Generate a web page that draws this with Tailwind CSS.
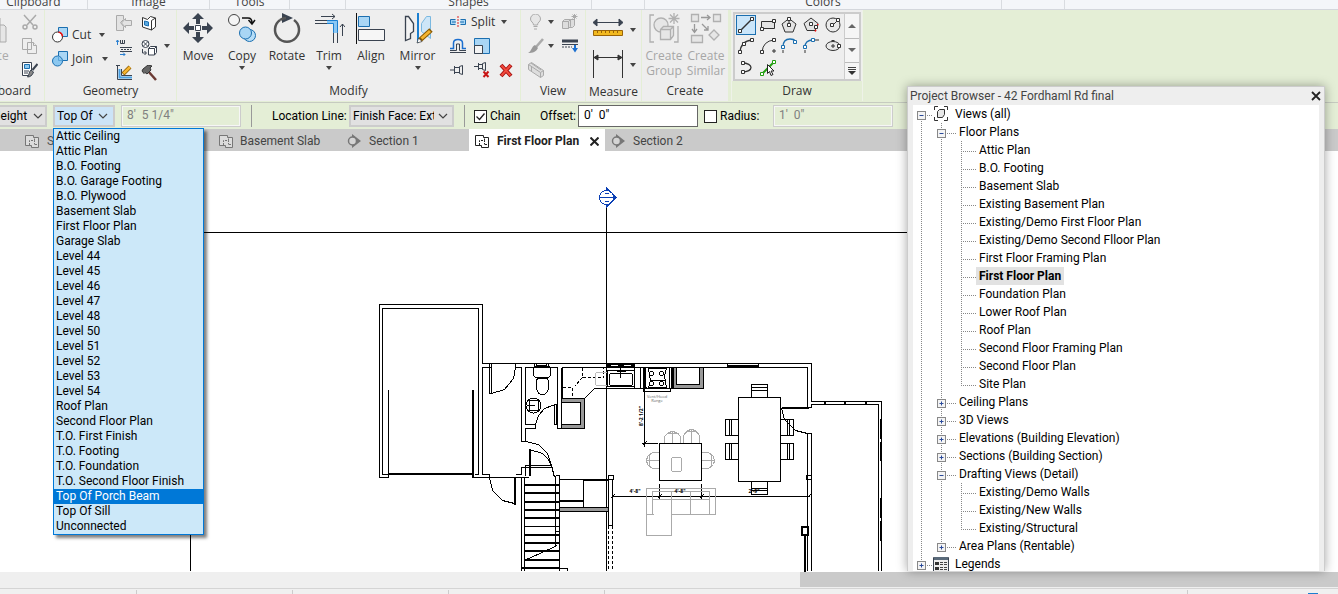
<!DOCTYPE html>
<html lang="en">
<head>
<meta charset="utf-8">
<title>Project Browser - 42 Fordhaml Rd final</title>
<script src="https://cdn.jsdelivr.net/npm/@tailwindcss/browser@4"></script>
</head>
<body class="h-screen overflow-hidden bg-white font-['Open_Sans','Noto_Sans',sans-serif] text-xs text-[#333]">
<svg class="hidden">
  <symbol id="caret" viewBox="0 0 6 4"><path d="M0 0h6L3 4z" fill="#444"/></symbol>
  <symbol id="chev" viewBox="0 0 10 6"><path d="M1 1l4 4 4-4" fill="none" stroke="#444" stroke-width="1.2"/></symbol>
  <symbol id="plan" viewBox="0 0 16 15"><path d="M1.500 1.500h8v2h5v10h-7v-2h-6z" fill="#fff" fill-opacity=".35" stroke="currentColor"/><path d="M5.500 11V6.500h5v4M10.500 6.500V4M11 10.500h3" fill="none" stroke="currentColor" stroke-dasharray="2 1"/></symbol>
  <symbol id="sect" viewBox="0 0 14 14"><path d="M5 0l9 7-9 7z" fill="#777"/><circle cx="5.500" cy="7" r="4" fill="#d4d4d4" stroke="#777" stroke-width="1.500"/></symbol>
</svg>
<div class="relative flex h-full flex-col overflow-hidden">

  <!-- Previous tab's panel titles -->
  <div class="flex h-[10px] shrink-0 items-end overflow-hidden border-b border-[#d4d7dc] bg-[#f4f6f9] text-center leading-[14px] text-[#444]">
    <span class="h-3.5 w-[88px] border-r border-[#d9dce0] pr-5">Clipboard</span>
    <span class="h-3.5 w-[122px] border-r border-[#d9dce0]">Image</span>
    <span class="h-3.5 w-[80px] border-r border-[#d9dce0]">Tools</span>
    <span class="h-3.5 w-[56px] border-r border-[#d9dce0]"></span>
    <span class="h-3.5 w-[246px] border-r border-[#d9dce0]">Shapes</span>
    <span class="h-3.5 w-[53px] border-r border-[#d9dce0]"></span>
    <span class="h-3.5 w-[357px] border-r border-[#d9dce0]">Colors</span>
    <span class="h-3.5 w-[63px] border-r border-[#d9dce0]"></span>
  </div>

  <!-- Ribbon -->
  <div class="flex h-[93px] shrink-0 border-b border-[#c6cbc0] bg-[#e4eed6] pb-px">
    <section class="-ml-9 flex w-20 shrink-0 flex-col bg-[#eee]">
      <div class="flex h-[72px] justify-between pr-1.5 pl-3.5">
        <button class="flex flex-col items-center pt-1 text-[#aaa]"><svg class="h-8 w-7" viewBox="0 0 28 32" fill="#e6e6e6" stroke="#aaa"><path d="M1 4h20v24H1zM13 11h12l2 2v15H13z"/></svg><span class="leading-5">Paste</span></button>
        <div class="flex flex-col gap-2 pt-1">
          <button aria-label="Cut to clipboard"><svg class="block size-4" viewBox="0 0 16 16" fill="none" stroke="#aaa" stroke-width="1.500"><path d="M2 1l9 10M14 1L5 11"/><circle cx="3" cy="13" r="2"/><circle cx="13" cy="13" r="2"/></svg></button>
          <button aria-label="Copy to clipboard"><svg class="block size-4" viewBox="0 0 16 16" fill="#eee" stroke="#aaa"><path d="M.5.500h9v11h-9zM5.500 4.500h6l3 3v8h-9z"/><path d="M11.500 4.500v3h3"/></svg></button>
          <button aria-label="Match type"><svg class="block size-4" viewBox="0 0 16 16"><path d="M.5.500h9v13h-9z" fill="#fff" stroke="#3a4350"/><path d="M2.500 2.500h5v4h-5z" fill="#8cc8f0" stroke="#1b6fb0"/><path d="M2 9h5M2 11h4" stroke="#3a4350"/><path d="M15.500 2l-5 6" stroke="#3a4350" stroke-width="2"/><path d="M9 8l2.500 2c-1 3-3 5-6 5 2-2 1-5 3.500-7z" fill="#888" stroke="#3a4350"/></svg></button>
        </div>
      </div>
      <h2 class="text-center leading-5">Clipboard</h2>
    </section>

    <section class="ml-px flex w-[131px] shrink-0 flex-col bg-[#eee]">
      <div class="flex h-[72px] pl-[7px]">
        <div class="flex w-16 flex-col gap-2 pt-[17px]">
          <button class="flex h-4 w-[53px] items-center gap-1"><svg class="size-4" viewBox="0 0 16 16"><path d="M6.500.500h9v9h-9z" fill="#a9d6f5" stroke="#1b6fb0"/><circle cx="5.500" cy="10" r="5" fill="#fff" stroke="#333"/><path d="M6.500 5A5 5 0 0 1 10.500 9.500" fill="none" stroke="#e11" stroke-width="1.500"/></svg><span class="flex-1 text-left">Cut</span><svg class="h-1 w-1.5"><use href="#caret"/></svg></button>
          <button class="flex h-4 w-14 items-center gap-1"><svg class="size-4" viewBox="0 0 16 16"><path d="M6.500.500h9v9h-9z" fill="#a9d6f5" stroke="#1b6fb0"/><circle cx="5.500" cy="10" r="5" fill="#8cc8f0" stroke="#1b6fb0"/><path d="M6.500 5v4.500h4" fill="none" stroke="#5aa5da"/></svg><span class="flex-1 text-left">Join</span><svg class="h-1 w-1.5"><use href="#caret"/></svg></button>
        </div>
        <div class="grid grid-cols-2 grid-rows-3 gap-x-[9px] gap-y-2 pt-1">
          <button aria-label="Cope"><svg class="block size-4" viewBox="0 0 16 16" fill="#e3e3e3" stroke="#aaa"><path d="M.5.500h7v4l-3 3 3 4v4h-7z"/><path d="M15.500 5.500h-6v-2l-4 4.500 4 4.500v-2h6z"/></svg></button>
          <button aria-label="Wall joins"><svg class="block size-4" viewBox="0 0 16 16"><path d="M1.500 2.500l5 2 3-3 5 1.500v9l-4 3-9-3z" fill="#fff" stroke="#333"/><path d="M10.500 5.500l4-2.500M10.500 5.500V15" stroke="#333"/><path d="M3.500 6l4 1v4l-4-1z" fill="#5aa9e0" stroke="#1b6fb0"/></svg></button>
          <button aria-label="Beam joins"><svg class="block size-4" viewBox="0 0 16 16" fill="none" stroke="#3a4350"><path d="M4.500 0v3.500h4V0M6.500 0v3"/><path d="M1.500 0v5M0 2l1.500-2L3 2M4 14.500h5M7 12.500l2 2-2 2" stroke="#2a7fd0"/><path d="M4 7.500h12M4 11.500h12"/><path d="M5 9.500h10" stroke-dasharray="2 1"/></svg></button>
          <button aria-label="Paint"><svg class="block size-4" viewBox="0 0 16 16" fill="#fff" stroke="#3a4350"><circle cx="4.500" cy="4" r="3.500"/><path d="M2 1.500l5 5M7 1.500l-5 5"/><path d="M7.500 8.500l2-2h6v6l-2 2.500h-6zM7.500 8.500h6V15M13.500 8.500l2-2"/><path d="M1.500 9v4H5M3.500 11l2 2-2 2" fill="none"/></svg></button>
          <button aria-label="Edit profile"><svg class="block size-4" viewBox="0 0 16 16" fill="none"><path d="M1.500 0v14.500H16M5.500 4v6.500H16" stroke="#3a4350"/><path d="M3.500 4v8.500H16" stroke="#49a0e3" stroke-width="2"/><path d="M7 9l7-7" stroke="#8a5a00" stroke-width="4"/><path d="M7.500 8.500L14 2" stroke="#f5b530" stroke-width="2.500"/><path d="M0 .500h4" stroke="#3a4350"/></svg></button>
          <button aria-label="Demolish"><svg class="block size-4" viewBox="0 0 16 16"><path d="M7 6l8 9" stroke="#6b3a33" stroke-width="2.500"/><path d="M1 6l1-2 5-4 4 1-2 2 1 2-4 4-2-1.500-1 1z" fill="#666" stroke="#333"/></svg></button>
        </div>
        <svg class="mt-[34px] ml-[7px] h-1 w-1.5"><use href="#caret"/></svg>
      </div>
      <h2 class="text-center leading-5">Geometry</h2>
    </section>

    <section class="ml-px flex w-[343px] shrink-0 flex-col bg-[#eee]">
      <div class="flex h-[72px] items-start">
        <button class="flex w-[42px] flex-col items-center pt-0.5"><svg class="size-8" viewBox="0 0 32 32" fill="#3a4350"><path d="M16 1l6 6h-4v5h-4V7h-4zM16 31l6-6h-4v-5h-4v5h-4zM1 16l6-6v4h5v4H7v4zM31 16l-6-6v4h-5v4h5v4z"/><path d="M13.500 13.500h5v5h-5z" fill="#fff" stroke="#3a4350"/></svg><span class="mt-1 leading-4">Move</span></button>
        <button class="ml-px flex w-11 flex-col items-center pt-0.5"><svg class="size-8" viewBox="0 0 32 32"><circle cx="8" cy="8" r="5.500" fill="#f5f5f5" stroke="#444"/><path d="M16 6h6q4 0 4 5M22.500 8l3.500 4 3-4" fill="none" stroke="#111" stroke-width="1.500"/><circle cx="23.500" cy="23.500" r="6" fill="#b6ddf7" stroke="#1b6fb0"/><circle cx="19.500" cy="21" r="6" fill="#a9d6f5" stroke="#1b6fb0"/></svg><span class="mt-1 leading-4">Copy</span><svg class="mt-0.5 h-1 w-1.5"><use href="#caret"/></svg></button>
        <button class="flex w-[46px] flex-col items-center pt-0.5"><svg class="size-8" viewBox="0 0 32 32"><path d="M9 8a12 12 0 1 0 14 0" fill="none" stroke="#555" stroke-width="2.500"/><path d="M11 1l11 5-11 5z" fill="#3a4350"/><path d="M9 8q3-2 6-2" stroke="#555" stroke-width="2.500" fill="none"/></svg><span class="mt-1 leading-4">Rotate</span></button>
        <button class="flex w-[38px] flex-col items-center pt-0.5"><svg class="size-8" viewBox="0 0 32 32" fill="none" stroke="#3a4350"><path d="M2 8.500h12M2 11.500h12M20.500 20v11M24.500 20v11M8 4.500h14M19 2l3 2.500L19 7M29.500 24V12M27 15l2.500-3 2.500 3"/><path d="M14 10h8.500v11" stroke="#8cc8f5" stroke-width="4"/><path d="M14 8.500h10.500v12M14 11.500h6.500v9" stroke="#1b7fd0"/></svg><span class="mt-1 leading-4">Trim</span><svg class="mt-0.5 h-1 w-1.5"><use href="#caret"/></svg></button>
        <button class="flex w-[46px] flex-col items-center pt-0.5"><svg class="size-8" viewBox="0 0 32 32"><path d="M1.500 1v31" stroke="#111"/><path d="M3.500 4.500h11v10h-11z" fill="#a9d6f5" stroke="#1b6fb0"/><path d="M3.500 17.500h26v11h-26z" fill="#f6f6f6" stroke="#3a4350"/></svg><span class="mt-1 leading-4">Align</span></button>
        <button class="flex w-[47px] flex-col items-center pt-0.5"><svg class="size-8" viewBox="0 0 32 32"><path d="M3.500 4.500h3l5 7v8l-3 2v5l-5 2z" fill="#f3f3f3" stroke="#3a4350" stroke-width="1.300"/><path d="M28.500 4.500h-4l-5 7v8l9 7z" fill="#cde6f8" stroke="#7ab8e0"/><path d="M16 1v30" stroke="#1b7fd0" stroke-width="2"/><path d="M18 28l11-10" stroke="#8a5a00" stroke-width="5"/><path d="M19.500 26.500L28 19" stroke="#f5b530" stroke-width="3"/><path d="M15 31l1.500-5 3.500 3.500z" fill="#fff" stroke="#333" stroke-width=".7"/></svg><span class="mt-1 leading-4">Mirror</span><svg class="mt-0.5 h-1 w-1.5"><use href="#caret"/></svg></button>
        <div class="ml-[9px] flex flex-col gap-2 pt-1">
          <button class="flex h-4 items-center"><svg class="size-4" viewBox="0 0 16 16"><path d="M5.500 5.500h-5v5h5M10.500 5.500h5v5h-5" fill="#a9d6f5" stroke="#1b6fb0"/><path d="M8 2v12" stroke="#d22" stroke-dasharray="2 1"/><path d="M2 8h4M10 8h4" stroke="#1b6fb0"/></svg><span class="ml-[5px]">Split</span><svg class="ml-1.5 h-1 w-1.5"><use href="#caret"/></svg></button>
          <div class="flex gap-2">
            <button aria-label="Offset"><svg class="block size-4" viewBox="0 0 16 16" fill="none"><path d="M0 14.500h16M0 12.500h6.500V6h3v6.500H16" stroke="#3a4350"/><path d="M0 10.500h3.500V5q0-3.500 4.500-3.500T12.500 5v5.500H16" stroke="#1b6fd0" stroke-width="1.500"/></svg></button>
            <button aria-label="Scale"><svg class="block size-4" viewBox="0 0 16 16"><path d="M.5.500h15v15H.5z" fill="#a9d6f5" stroke="#1b6fb0"/><path d="M.5 7.500h8v8h-8z" fill="#f3f3f3" stroke="#3a4350"/></svg></button>
          </div>
          <div class="flex gap-2">
            <button aria-label="Pin"><svg class="block size-4" viewBox="0 0 16 16" fill="none" stroke="#3a4350"><path d="M0 8h4M4.500 4v8M4.500 5.500h5M4.500 10.500h5M9.500 4.500l3-1v9l-3-1z"/></svg></button>
            <button aria-label="Unpin"><svg class="block size-4" viewBox="0 0 16 16" fill="none" stroke="#3a4350"><path d="M0 4.500h4M4.500 1v7M4.500 2.500h4M4.500 6.500h4M8.500 1.500l3-1v8l-3-1z"/><path d="M9.500 9.500l5 5.500M14.500 9.500L9.500 15" stroke="#c81414" stroke-width="2"/></svg></button>
            <button aria-label="Delete"><svg class="block size-4" viewBox="0 0 16 16"><path d="M3 3l10 11M13 3L3 14" stroke="#a81010" stroke-width="4"/><path d="M3.500 3.500l9 10M12.500 3.500l-9 10" stroke="#f24a3d" stroke-width="2"/></svg></button>
          </div>
        </div>
      </div>
      <h2 class="text-center leading-5">Modify</h2>
    </section>

    <section class="ml-px flex w-16 shrink-0 flex-col bg-[#eee]">
      <div class="grid h-[72px] grid-cols-[16px_18px_16px] grid-rows-[16px_16px_16px] items-center gap-y-2 pt-1 pl-[7px]">
        <button aria-label="Hide"><svg class="block size-4" viewBox="0 0 16 16" fill="#e6e6e6" stroke="#aaa"><path d="M5.500 11c0-3-3-3-3-6a5 5 0 0 1 10 0c0 3-3 3-3 6zM5.500 12.500h4M6 15h3"/></svg></button>
        <svg class="ml-1 h-1 w-1.5"><use href="#caret"/></svg>
        <button aria-label="Displace"><svg class="block size-4" viewBox="0 0 16 16" fill="#ddd" stroke="#aaa"><path d="M.5 7.500l2-2h6v7l-2 2h-6zM.5 7.500h6v7M6.500 7.500l2-2M8.500 5.500h4v6l-2 2h-3"/><path d="M12.500 0v6M9.500 2.500h6M10.500.500l4 4M14.500.500l-4 4"/></svg></button>
        <button aria-label="Override"><svg class="block size-4" viewBox="0 0 16 16"><path d="M15 1L8 9" stroke="#aaa" stroke-width="2.500"/><path d="M7 7l3 3c-2 4-5 5-10 5 4-2 3-6 7-8z" fill="#999"/></svg></button>
        <svg class="ml-1 h-1 w-1.5"><use href="#caret"/></svg>
        <button aria-label="Linework"><svg class="block size-4" viewBox="0 0 16 16"><path d="M0 3h16" stroke="#3a4350" stroke-width="3"/><path d="M0 6.500h16" stroke="#3a4350"/><path d="M0 9h10" stroke="#3a4350" stroke-dasharray="2 1"/><path d="M12 7h2v3h2l-3 4.500-3-4.500h2z" fill="#1b6fd0"/></svg></button>
        <button aria-label="Section box"><svg class="block size-4" viewBox="0 0 16 16" fill="#ddd" stroke="#aaa"><path d="M.5 2.500l3-2 12 8v5l-3 2-12-8zM.5 2.500l12 8v5M12.500 10.500l3-2M3.500 5v4M3 1l10 7"/></svg></button>
      </div>
      <h2 class="text-center leading-5">View</h2>
    </section>

    <section class="ml-px flex w-[55px] shrink-0 flex-col bg-[#eee]">
      <div class="grid h-[72px] grid-cols-[32px_6px] content-start items-center gap-x-1.5 pt-1.5 pl-1.5">
        <button aria-label="Measure"><svg class="block h-7 w-8" viewBox="0 0 32 28"><path d="M2 6.500h28M5 3L1 6.500 5 10zM27 3l4 3.500L27 10z" fill="#3a4350" stroke="#3a4350"/><path d="M1.500 14.500h29v5h-29z" fill="#f2b91f" stroke="#9a6408"/><path d="M5.500 14v3M9.500 14v3M13.500 14v3M17.500 14v3M21.500 14v3M25.500 14v3" stroke="#9a6408"/></svg></button>
        <svg class="h-1 w-1.5"><use href="#caret"/></svg>
        <button aria-label="Dimension"><svg class="mt-1.5 block h-8 w-8" viewBox="0 0 32 32" stroke="#333"><path d="M1.500 0v28M30.500 0v28M2 7.500h28"/><path d="M2 7.500L6 5v5zM30 7.500L26 5v5z" fill="#333"/></svg></button>
        <svg class="mt-1 h-1 w-1.5"><use href="#caret"/></svg>
      </div>
      <h2 class="text-center leading-5">Measure</h2>
    </section>

    <section class="ml-px flex w-[86px] shrink-0 flex-col bg-[#eee]">
      <div class="flex h-[72px] text-[#a6a6a6]">
        <button class="flex w-11 flex-col items-center pt-0.5"><svg class="size-8" viewBox="0 0 32 32" fill="#e6e6e6" stroke="#b0b0b0" stroke-width="1.300"><path d="M6 3H2v27h4M26 30h4V14" fill="none"/><circle cx="13" cy="13" r="7"/><path d="M12.500 17.500l3-3h10v9l-3 4h-10zM12.500 17.500h10v10M22.500 17.500l3-3"/><path d="M26 1v11M20.500 6.500h11M22 2.500l8 8M30 2.500l-8 8"/></svg><span class="mt-1 leading-[15px]">Create Group</span></button>
        <button class="flex w-10 flex-col items-center pt-0.5"><svg class="size-8" viewBox="0 0 32 32" fill="#e6e6e6" stroke="#b0b0b0" stroke-width="1.300"><path d="M1.500 2.500h7v7h-7zM23.500 2.500h7v7h-7zM1.500 23.500h11v7h-11zM24 18l5 5-5 5-5-5z"/><path d="M11 5.500h9M17 3l3 2.500L17 8M4.500 12v8M2 17l2.500 3.500L7 17M12 12l6 6M18 14v4h-4" fill="none" stroke="#999"/></svg><span class="mt-1 leading-[15px]">Create Similar</span></button>
      </div>
      <h2 class="text-center leading-5">Create</h2>
    </section>

    <section class="ml-[3px] flex w-[132px] shrink-0 flex-col border-x border-[#eef2e8]">
      <div class="h-[72px] bg-[#eee] px-px pt-0.5">
        <div class="flex h-[69px] border-2 border-[#ccc]">
          <div class="grid flex-1 grid-cols-5 grid-rows-3 place-items-center">
            <button class="border border-[#1b6fb0] bg-[#cbe6fa]" aria-label="Line"><svg class="block size-[18px]" viewBox="0 0 18 18" fill="#fff" stroke="#333"><path d="M3 15L15 3" stroke-width="1.500"/><path d="M1.500 13.500h3v3h-3zM13.500 1.500h3v3h-3z"/></svg></button>
            <button aria-label="Rectangle"><svg class="block size-4" viewBox="0 0 16 16" fill="#fff" stroke="#333"><path d="M1.500 4.500h13v7h-13z" fill="#e3e3e3"/><path d="M.5 10.500h3v3h-3zM12.500 2.500h3v3h-3z"/></svg></button>
            <button aria-label="Inscribed polygon"><svg class="block size-4" viewBox="0 0 16 16" fill="#fff" stroke="#333"><path d="M8 1.500l7 5.500-3 8H4L1 7z" fill="#e3e3e3"/><path d="M8 2v6"/><path d="M6.500.500h3v3h-3zM6.500 6.500h3v3h-3z"/></svg></button>
            <button aria-label="Circumscribed polygon"><svg class="block size-4" viewBox="0 0 16 16" fill="#fff" stroke="#333"><path d="M8 1l7 5.500-3 7H4L1 6.500z" fill="#e3e3e3"/><path d="M15 7l-3 8" stroke="#e11" stroke-width="1.500" stroke-dasharray="2 1"/><path d="M6.500 5.500h3v3h-3zM11.500 8.500h3v3h-3z"/></svg></button>
            <button aria-label="Circle"><svg class="block size-4" viewBox="0 0 16 16" fill="#fff" stroke="#333"><circle cx="8" cy="8" r="7" fill="#e9e9e9"/><path d="M8 8l5-5"/><path d="M5.500 6.500h3v3h-3zM11.500 1.500h3v3h-3z"/></svg></button>
            <button aria-label="Start-end-radius arc"><svg class="block size-4" viewBox="0 0 16 16" fill="#fff" stroke="#333"><path d="M2 14Q3 3 14 2" fill="none" stroke-width="1.300"/><path d="M.5 12.500h3v3h-3zM4.500 4.500h3v3h-3zM12.500.500h3v3h-3z"/></svg></button>
            <button aria-label="Center-ends arc"><svg class="block size-4" viewBox="0 0 16 16" fill="#fff" stroke="#333"><path d="M2 14Q3 3 14 2" fill="none"/><path d="M.5 12.500h3v3h-3zM12.500.500h3v3h-3z"/><path d="M14 11v4M12 13h4"/></svg></button>
            <button aria-label="Tangent end arc"><svg class="block size-4" viewBox="0 0 16 16" fill="#fff" stroke="#1b6fb0"><path d="M2 9Q2 1 9 1q4 0 5 2" fill="none" stroke-width="1.300"/><path d="M.5 7.500h3v3h-3zM12.500 2.500h3v3h-3z"/><path d="M2 12v3" stroke="#333"/></svg></button>
            <button aria-label="Fillet arc"><svg class="block size-4" viewBox="0 0 16 16" fill="#fff" stroke="#1b6fb0"><path d="M2 9Q2 2 10 2" fill="none" stroke-width="1.300"/><path d="M.5 7.500h3v3h-3zM8.500.500h3v3h-3z"/><path d="M2 12v3M12 2h4" stroke="#333"/></svg></button>
            <button aria-label="Ellipse"><svg class="block size-4" viewBox="0 0 16 16" fill="#fff" stroke="#333"><ellipse cx="8" cy="8" rx="7" ry="4.500" fill="#e9e9e9"/><path d="M6 8h4M8 6v4"/><path d="M12.500 6.500h3v3h-3zM6.500 2.500h3"/></svg></button>
            <button aria-label="Partial ellipse"><svg class="block size-4" viewBox="0 0 16 16" fill="#fff" stroke="#333"><path d="M4 3c12 0 12 9 0 9" fill="none" stroke-width="1.300"/><path d="M3.500 1.500h3v3h-3zM3.500 10.500h3v3h-3z"/></svg></button>
            <button aria-label="Pick lines"><svg class="block size-4" viewBox="0 0 16 16" fill="#fff" stroke="#22a010"><path d="M2 14L14 2" stroke-width="2"/><path d="M.5 12.500h3v3h-3zM12.500.500h3v3h-3z"/><path d="M7.500 4.500v9l2-2 1.500 4 2-1-2-3.500h3z" stroke="#222"/></svg></button>
          </div>
          <div class="flex w-[15px] flex-col divide-y divide-[#bbb] border-l border-[#ccc] bg-[#f5f5f5]">
            <button class="grid flex-1 place-items-center" aria-label="Scroll up"><svg class="h-1 w-2" viewBox="0 0 8 4"><path d="M0 4h8L4 0z" fill="#666"/></svg></button>
            <button class="grid flex-1 place-items-center" aria-label="Scroll down"><svg class="h-1 w-2" viewBox="0 0 8 4"><path d="M0 0h8L4 4z" fill="#666"/></svg></button>
            <button class="grid h-4 place-items-center" aria-label="Expand gallery"><svg class="h-2 w-2" viewBox="0 0 8 8"><path d="M0 .500h8M0 2.500h8" stroke="#444"/><path d="M0 4h8L4 8z" fill="#333"/></svg></button>
          </div>
        </div>
      </div>
      <h2 class="text-center leading-5">Draw</h2>
    </section>
  </div>

  <!-- Options bar -->
  <div class="flex h-[26px] shrink-0 items-center overflow-hidden bg-[#e4eed6] font-[Roboto,sans-serif] text-black">
    <div class="-ml-4 grid w-[63px] shrink-0 items-center">
      <select aria-label="Constraint" class="col-start-1 row-start-1 h-[22px] w-full appearance-none border-2 border-[#ccc] bg-[#e1e1e1] pl-1.5"><option>Height</option></select>
      <svg class="pointer-events-none col-start-1 row-start-1 mr-1 h-1.5 w-2.5 justify-self-end"><use href="#chev"/></svg>
    </div>
    <div class="ml-1.5 grid w-[62px] shrink-0 items-center">
      <select aria-label="Top constraint level" class="col-start-1 row-start-1 h-[22px] w-full appearance-none border-2 border-[#ccc] bg-[#cce4f7] pl-0.5"><option>Top Of Porch Beam</option></select>
      <span class="pointer-events-none col-start-1 row-start-1 mr-0.5 flex h-4 w-5 items-center justify-center justify-self-end bg-[#cce4f7]"><svg class="h-1.5 w-2.5"><use href="#chev"/></svg></span>
    </div>
    <input aria-label="Height value" class="ml-1.5 h-[22px] w-[120px] shrink-0 border-2 border-[#f6f6f6] pb-0.5 pl-1 text-[#808080] outline outline-[#ccc] -outline-offset-1" value="8'  5 1/4&quot;" disabled>
    <span class="ml-2.5 h-[22px] w-px bg-[#999]"></span>
    <label for="loc" class="ml-5 w-[77px] shrink-0 whitespace-nowrap">Location Line:</label>
    <div class="grid w-[105px] shrink-0 items-center">
      <select id="loc" class="col-start-1 row-start-1 h-[22px] w-full appearance-none border-2 border-[#ccc] bg-[#e1e1e1] pl-0.5"><option>Finish Face: Exterior</option></select>
      <span class="pointer-events-none col-start-1 row-start-1 mr-0.5 flex h-4 w-[18px] items-center justify-center justify-self-end bg-[#e1e1e1]"><svg class="h-1.5 w-2.5"><use href="#chev"/></svg></span>
    </div>
    <span class="ml-2.5 h-[22px] w-px bg-[#999]"></span>
    <label class="ml-[9px] flex w-[66px] shrink-0 items-center gap-[3px]"><span class="grid place-items-center"><input type="checkbox" checked class="col-start-1 row-start-1 size-[13px] appearance-none border border-[#222] bg-white"><svg class="pointer-events-none col-start-1 row-start-1 size-[9px]" viewBox="0 0 9 9"><path d="M.5 4.500l3 3L8.500 1.500" fill="none" stroke="#222" stroke-width="1.300"/></svg></span>Chain</label>
    <label for="off" class="w-[38px] shrink-0">Offset:</label>
    <input id="off" class="h-[22px] w-[120px] shrink-0 border border-[#666] bg-white pb-0.5 pl-[5px]" value="0'  0&quot;">
    <label class="ml-1.5 flex w-[69px] shrink-0 items-center gap-[3px]"><input type="checkbox" class="size-[13px] appearance-none border border-[#222] bg-white">Radius:</label>
    <input aria-label="Radius value" class="h-[22px] w-[120px] shrink-0 border-2 border-[#f6f6f6] pb-0.5 pl-1 text-[#808080] outline outline-[#ccc] -outline-offset-1" value="1'  0&quot;" disabled>
  </div>

  <!-- View tabs -->
  <nav class="flex h-[22px] shrink-0 items-center bg-[#cacaca] pl-6 font-[Roboto,sans-serif] text-[#555]">
    <a href="#" class="flex w-[194px] items-center gap-[7px] pt-0.5 text-[#777]"><svg class="h-[15px] w-4"><use href="#plan"/></svg><span class="text-[#555]">Second Floor Plan</span></a>
    <a href="#" class="flex w-[129px] items-center gap-[6px] pt-0.5 text-[#777]"><svg class="h-[15px] w-4"><use href="#plan"/></svg><span class="text-[#444]">Basement Slab</span></a>
    <a href="#" class="flex w-[122px] items-center gap-2 pt-0.5 text-[#444]"><svg class="size-3.5"><use href="#sect"/></svg>Section 1</a>
    <div class="flex h-full w-[136px] items-center bg-white pt-0.5 pl-[5px] text-[#222]"><a href="#" class="flex items-center gap-[7px] font-bold whitespace-nowrap"><svg class="h-[15px] w-4"><use href="#plan"/></svg>First Floor Plan</a><button class="mr-1.5 ml-auto" aria-label="Close view"><svg class="block size-[9px]" viewBox="0 0 9 9"><path d="M.5.500l8 8M8.500.500l-8 8" stroke="#222" stroke-width="2"/></svg></button></div>
    <a href="#" class="ml-1.5 flex items-center gap-2 pt-0.5 text-[#444]"><svg class="size-3.5"><use href="#sect"/></svg>Section 2</a>
  </nav>

  <!-- Drawing area -->
  <main class="min-h-0 flex-1 overflow-hidden bg-white">
    <svg class="block h-full w-full" shape-rendering="crispEdges">
      <g transform="translate(.5,-150.500)" fill="none" stroke="#000">
        <path d="M190 500V570M190 232H907M606 206V570"/>
        <!-- garage -->
        <path d="M482 363V304H379V477H388V389M388 474H382V308H478V474H474M473 477H528"/>
        <path d="M388 473.500H473M472.500 389V477" stroke-width="2"/>
        <!-- outer walls -->
        <path d="M482 363H811V401M491 367H482V474H489V477M807 407V367H561M515 363V367H521V441H525V428H535V424H525V367H557V428H584"/>
        <path d="M489 363V393H491V363M515 367L513 378 504 389 491 393"/>
        <path d="M489 477L492 490 502 500 514 503M515 474H521V467H551V465H525V475"/>
        <path d="M514.500 477V504M529.500 449V475" stroke-width="2"/>
        <path d="M525 441L538 444 547 453 551 465 554 477M529 449L542 453 548 459 551 465"/>
        <path d="M534 363V367H548V363M536 363V367M546 363V367M536 365H546M533 366H549"/>
        <!-- bathroom -->
        <path d="M533 367V375L535 377H548L550 375V367M537 378H547C550 383 548 392 544 394H540C536 392 534 383 537 378M557 428V403"/>
        <circle cx="533" cy="405" r="7.500"/><path d="M529 400H538V410H529zM526 405H534"/>
        <path d="M554 404V424H556V404zM555 404L544 408 538 415 535 424"/>
        <path d="M561.500 367V398" stroke-width="2"/>
        <path d="M561 398H584V428H561z" fill="#999"/><path d="M561 402H580V424H561z" fill="#fff"/>
        <!-- kitchen -->
        <path d="M582 367V377H603V367M582 377L574 386M562 387H572V398" stroke-dasharray="3 2"/>
        <path d="M584 398L594 388H703"/>
        <rect x="595" y="372" width="12" height="13" rx="2" stroke="#bbb"/>
        <path d="M606 364H634V366H606z" fill="#000"/><path d="M610 365H617M623 365H630" stroke="#fff"/>
        <path d="M607 370H634V386H607zM634 367V388M620 366V377M616 371H625M640 367V388"/><rect x="609" y="373" width="23" height="12" rx="2"/>
        <path d="M643 367V388H671V367M645 367V388M669 367V388M643 388V391H670V388M648 368H666L664 375 666 387H648L650 380 648 368M650 380H664" />
        <path d="M643.500 367V388M671.500 367V388" stroke-width="2"/>
        <circle cx="651" cy="373" r="2"/><circle cx="661" cy="373" r="2"/><circle cx="651" cy="383" r="2"/><circle cx="661" cy="383" r="2"/>
        <path d="M673 367H703V388H673z" fill="#999"/><path d="M676 367H699V384H676z" fill="#fff"/>
        <path d="M727 365H758V366H727zM727 363V367M758 363V367" fill="#000"/>
        <!-- dimensions -->
        <path d="M644 388V446M641 443H657M612 496H809M659 483V498M701 483V498M642 391L646 387M642 445L646 441M610 498L614 494M657 498L661 494M699 498L703 494M806 498L810 494"/>
        <!-- seating -->
        <g stroke="#aaa"><path d="M664 443V436L668 432 672 431 676 432 680 436V443M672 431V443M666 433H678M683 443V435L687 430 691 429 695 430 699 435V443M691 429V443M686 431H696"/>
        <path d="M659 452H652L647 456 646 460 647 464 652 468H659M646 460H659M649 454V466M701 452H708L713 456 714 460 713 464 708 468H701M701 460H714M711 454V466"/>
        <rect x="671" y="457" width="10" height="14" rx="2"/>
        <path d="M653 514H646V488H715V514H671M652 514V491H709V514M652 499H709M671 491V535H646V514M690 491V514"/></g>
        <path d="M659 443H701V480H659z"/>
        <path d="M738 397H780V481H738zM751 397V384H767V397M751 387H767M751 390H767M751 481V494H767V481M751 488H767M751 490H767M738 419H725V435H738M729 419V435M731 419V435M738 443H725V459H738M729 443V459M731 443V459M780 419H793V435H780M787 419V435M789 419V435M780 443H793V459H780M787 443V459M789 443V459"/>
        <!-- porch -->
        <path d="M811 401H881V570M807 407H811V404H878V570M781 408L784 419 795 430 807 433H811V570M807 433V570M806 475H811V479H806z"/>
        <path d="M781 407.500H808M804.500 535V571M880.500 418V438M880.500 441V460M880.500 497V517M880.500 520V540" stroke-width="2"/>
        <path d="M824 401V404M844 401V404M865 401V404M801 526H807V534H801z" stroke-width="2"/>
        <!-- stairs -->
        <path d="M521 477V570M524 477V570M559 475V570M555 475H559M555 475V545M524 526H559M555 531H559M557 545L526 559M559 568H567V570M559 479H608M583 479V507"/>
        <path d="M524 484.500H559M524 492.500H559M524 501.500H559M524 509.500H559M524 517.500H559M524 534.500H559M524 542.500H559M524 550.500H559M524 559.500H559M521 567.500H559M559 500.500H583M583 479.500H608" stroke-width="2"/>
        <path d="M559 507H608V511H559z" fill="#999"/>
        <path d="M608 475H613V479H608zM608 479V525H612V479"/>
        <path d="M608 525V570M612 525V570" stroke-dasharray="3 2"/>
      </g>
      <g transform="translate(.5,-150.500)" fill="none" stroke="#0a3fb5">
        <path d="M606 187L616 197 606 207z" fill="#0a3fb5"/><circle cx="606" cy="197" r="7" fill="#fff"/><path d="M598 197H616M604 193H608M604 201H608"/>
      </g>
      <g transform="translate(0,-151)" class="text-[5px]" text-anchor="middle">
        <g class="text-[4px]" fill="#666"><text x="657" y="398">Vent/Hood</text><text x="657" y="402">Range</text></g>
        <text x="635" y="493" class="font-bold">4'-8"</text><text x="680" y="493" class="font-bold">4'-8"</text><text x="754" y="493" class="font-bold">2'-9"</text>
        <text transform="translate(643,416) rotate(-90)" class="font-bold">8'-2 1/2"</text>
      </g>
    </svg>
  </main>

  <!-- Horizontal scroll bar and status bar -->
  <div class="flex h-4 shrink-0 justify-end bg-[#efefef] pb-px"><div class="w-[538px] bg-[#cacaca]"></div></div>
  <footer class="flex h-1.5 shrink-0 border-t border-[#d4d4d4] bg-[#f0f0f0] pt-px">
    <span class="w-[137px] border-r border-[#ccc]"></span><span class="w-[156px] border-r border-[#ccc]"></span><span class="w-[156px] border-r border-[#ccc]"></span><span class="w-[156px] border-r border-[#ccc]"></span><span class="flex-1 border-r border-[#ccc]"></span><span class="flex w-[150px] items-end justify-end pr-5"><span class="h-px w-2.5 bg-[#1b7fd0]"></span></span>
  </footer>

  <!-- Level list -->
  <ul id="levels" role="listbox" aria-label="Levels" class="absolute top-32 left-[53px] w-[151px] border border-[#0078d7] bg-[#cce8f9] font-[Roboto,sans-serif] leading-[15px] text-black shadow-[3px_3px_3px_rgba(0,0,0,0.5)]"></ul>

  <!-- Project browser -->
  <aside class="absolute top-[86px] right-[13px] bottom-[23px] flex w-[418px] flex-col overflow-hidden border border-b-0 border-[#ccc] bg-[#eee] px-[5px] font-[Roboto,sans-serif] shadow-[0_0_10px_rgba(0,0,0,0.35)]">
    <header class="-ml-[3px] flex h-[18px] shrink-0 items-center justify-between text-[#444]"><h1>Project Browser - 42 Fordhaml Rd final</h1><button aria-label="Close browser" class="-mr-0.5"><svg class="block size-[10px]" viewBox="0 0 10 10"><path d="M1 1l8 8M9 1L1 9" stroke="#222" stroke-width="1.800"/></svg></button></header>
    <ul id="tree" role="tree" class="min-h-0 flex-1 overflow-hidden bg-white leading-[18px] text-black"></ul>
  </aside>
</div>

<script>
const levels = ["Attic Ceiling","Attic Plan","B.O. Footing","B.O. Garage Footing","B.O. Plywood","Basement Slab","First Floor Plan","Garage Slab","Level 44","Level 45","Level 46","Level 47","Level 48","Level 50","Level 51","Level 52","Level 53","Level 54","Roof Plan","Second Floor Plan","T.O. First Finish","T.O. Footing","T.O. Foundation","T.O. Second Floor Finish","Top Of Porch Beam","Top Of Sill","Unconnected"];
document.getElementById("levels").innerHTML = levels.map(l => l === "Top Of Porch Beam"
  ? `<li role="option" aria-selected="true" class="bg-[#0078d7] pl-0.5 text-white">${l}</li>`
  : `<li role="option" class="pl-0.5">${l}</li>`).join("");

// [depth, marker, label]: marker is "-" open, "+" closed, "" leaf, "end" last leaf of a branch
const rows = [[0,"-","Views (all)"],[1,"-","Floor Plans"],[2,"","Attic Plan"],[2,"","B.O. Footing"],[2,"","Basement Slab"],[2,"","Existing Basement Plan"],[2,"","Existing/Demo First Floor Plan"],[2,"","Existing/Demo Second Flloor Plan"],[2,"","First Floor Framing Plan"],[2,"","First Floor Plan"],[2,"","Foundation Plan"],[2,"","Lower Roof Plan"],[2,"","Roof Plan"],[2,"","Second Floor Framing Plan"],[2,"","Second Floor Plan"],[2,"end","Site Plan"],[1,"+","Ceiling Plans"],[1,"+","3D Views"],[1,"+","Elevations (Building Elevation)"],[1,"+","Sections (Building Section)"],[1,"-","Drafting Views (Detail)"],[2,"","Existing/Demo Walls"],[2,"","Existing/New Walls"],[2,"end","Existing/Structural"],[1,"+","Area Plans (Rentable)"],[0,"+","Legends"]];
const viewsIcon = '<path d="M25 1.500h-3.500V5M31 1.500h3.500V5M21.500 12v3.500H25M34.500 12v3.500H31" fill="none" stroke="#333"/><path d="M24.500 6.500l2-2h5v5l-2 3h-5z" fill="#e8e8e8" stroke="#333"/>';
const legendIcon = '<path d="M20.500 2.500h15V18h-15z" fill="#eee" stroke="#3a4350"/><path d="M21 3.500h14" stroke="#5a6a7a" stroke-width="3"/><path d="M22 7h4v3h-4zM22 12h4v3h-4z" fill="#333"/><path d="M27 7.500h7M27 9.500h7M27 12.500h7M27 14.500h7" stroke="#444" stroke-dasharray="3 1"/>';
document.getElementById("tree").innerHTML = rows.map(([d, m, t], i) => {
  const x = 8 + d * 20;
  const last = t === "Area Plans (Rentable)";
  let lines = "";
  if (d > 0) lines += "M8.500 0V18";
  if (d === 0) lines += i ? "M8.500 0V10" : "M8.500 10V18";
  if (d === 2) lines += "M28.500 0V18";
  if (d === 1) lines += last ? "M28.500 0V10" : "M28.500 0V18";
  if (d === 2) lines += m === "end" ? "M48.500 0V10" : "M48.500 0V18";
  lines += `M${x} 10.500H${d === 0 ? 19 : x + 15}`;
  const box = m === "-" || m === "+" ? `<rect x="${x - 3.500}" y="6.500" width="8" height="8" fill="#f4f4f4" stroke="#888"/><path d="M${x - 1.500} 10.500h4${m === "+" ? "M" + (x + .5) + " 8.500v4" : ""}" stroke="#2a4a9a"/>` : "";
  const icon = d ? "" : i ? legendIcon : viewsIcon;
  const label = t === "First Floor Plan" ? `<span class="bg-[#e2e2e2] px-[3px] font-bold">${t}</span>` : `<span class="px-[3px]">${t}</span>`;
  const w = [39, 43, 63][d];
  return `<li role="treeitem" class="flex h-[18px] whitespace-nowrap"><svg class="shrink-0" width="${w}" height="18"><path d="${lines}" fill="none" stroke="#888" stroke-dasharray="1 1"/>${box}${icon}</svg>${label}</li>`;
}).join("");
</script>
</body>
</html>
